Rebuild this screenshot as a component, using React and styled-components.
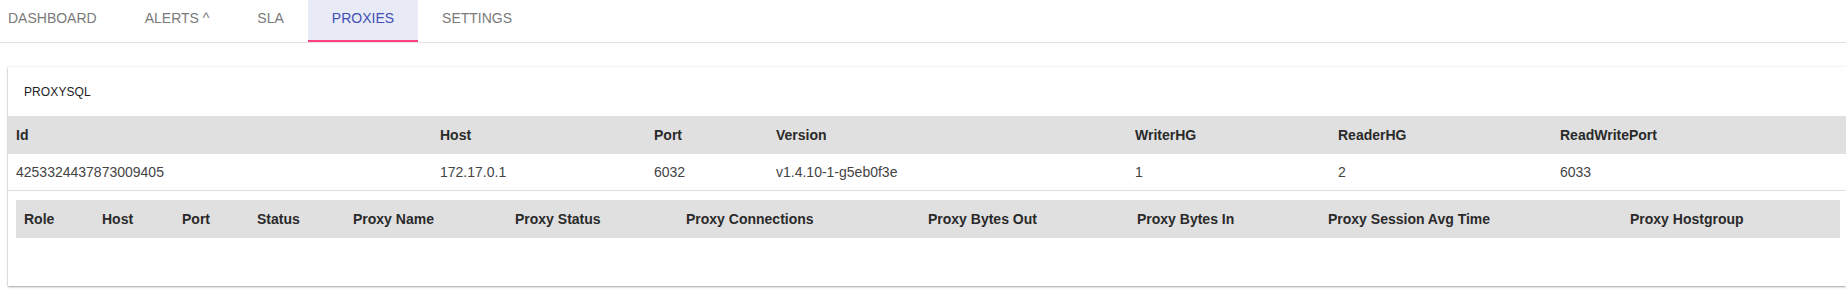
import React from "react";
import styled, { createGlobalStyle } from "styled-components";

const tabs = ["Dashboard", "Alerts ^", "SLA", "Proxies", "Settings"];

const proxyColumns = [
  { label: "Id", width: 424 },
  { label: "Host", width: 214 },
  { label: "Port", width: 122 },
  { label: "Version", width: 359 },
  { label: "WriterHG", width: 203 },
  { label: "ReaderHG", width: 222 },
  { label: "ReadWritePort" },
];

const proxyRows = [
  ["4253324437873009405", "172.17.0.1", "6032", "v1.4.10-1-g5eb0f3e", "1", "2", "6033"],
];

const serverColumns = [
  { label: "Role", width: 78 },
  { label: "Host", width: 80 },
  { label: "Port", width: 75 },
  { label: "Status", width: 96 },
  { label: "Proxy Name", width: 162 },
  { label: "Proxy Status", width: 171 },
  { label: "Proxy Connections", width: 242 },
  { label: "Proxy Bytes Out", width: 209 },
  { label: "Proxy Bytes In", width: 191 },
  { label: "Proxy Session Avg Time", width: 302 },
  { label: "Proxy Hostgroup" },
];

const App = () => {
  return (
    <>
      <GlobalStyle />
      <TabBar>
        {tabs.map((tab) => (
          <Tab key={tab} $active={tab === "Proxies"}>
            {tab}
          </Tab>
        ))}
      </TabBar>

      <Card>
        <CardTitle>PROXYSQL</CardTitle>
        <Table>
          <thead>
            <tr>
              {proxyColumns.map((col) => (
                <Th key={col.label} $width={col.width}>
                  {col.label}
                </Th>
              ))}
            </tr>
          </thead>
          <tbody>
            {proxyRows.map((row, i) => (
              <tr key={i}>
                {row.map((cell, j) => (
                  <Td key={j}>{cell}</Td>
                ))}
              </tr>
            ))}
          </tbody>
        </Table>

        <ServerTable>
          <thead>
            <tr>
              {serverColumns.map((col) => (
                <Th key={col.label} $width={col.width}>
                  {col.label}
                </Th>
              ))}
            </tr>
          </thead>
        </ServerTable>
      </Card>
    </>
  );
};

export default App;

const GlobalStyle = createGlobalStyle`
  body {
    margin: 0;
    background: #fff;
    font-family: "Liberation Sans", Arial, sans-serif;
    overflow: hidden;
  }
`;

const TabBar = styled.div`
  display: flex;
  border-bottom: 1px solid #e0e0e0;
`;

const Tab = styled.div`
  box-sizing: border-box;
  height: 42px;
  display: flex;
  align-items: center;
  padding: 0 24px 4px;
  font-size: 14px;
  text-transform: uppercase;
  color: ${(p) => (p.$active ? "#3f51b5" : "#7a7a7a")};
  background: ${(p) => (p.$active ? "#e8eaf6" : "transparent")};
  border-bottom: 2px solid ${(p) => (p.$active ? "#ff4081" : "transparent")};
  white-space: nowrap;
  cursor: pointer;

  &:first-child {
    padding-left: 8px;
  }
`;

const Card = styled.div`
  margin: 24px 0 6px 8px;
  padding-bottom: 48px;
  background: #fff;
  box-shadow: 0 1px 2px rgba(0, 0, 0, 0.35), 0 0 1px rgba(0, 0, 0, 0.15);
`;

const CardTitle = styled.div`
  height: 49px;
  display: flex;
  align-items: center;
  padding-left: 16px;
  font-size: 12px;
  color: #222;
  letter-spacing: 0.1px;
`;

const Table = styled.table`
  width: 100%;
  table-layout: fixed;
  border-collapse: collapse;
  font-size: 14px;
`;

const ServerTable = styled(Table)`
  width: calc(100% - 14px);
  margin: 9px 6px 0 8px;
`;

const Th = styled.th`
  width: ${(p) => (p.$width ? `${p.$width}px` : "auto")};
  height: 38px;
  padding: 0 8px;
  background: #e0e0e0;
  text-align: left;
  font-weight: bold;
  color: #2a2a2a;
  white-space: nowrap;
  box-sizing: border-box;
`;

const Td = styled.td`
  height: 36px;
  padding: 0 8px;
  color: #444;
  border-bottom: 1px solid #e0e0e0;
  white-space: nowrap;
  box-sizing: border-box;
`;
